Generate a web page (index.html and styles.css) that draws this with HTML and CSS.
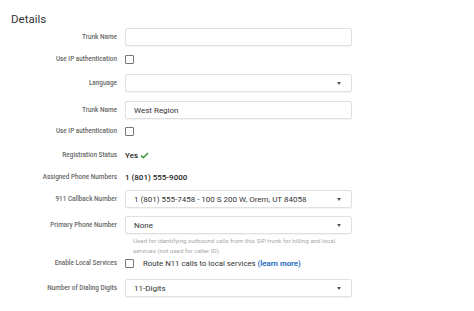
FILE: index.html
```html
<!DOCTYPE html>
<html>
<head>
<meta charset="utf-8">
<link rel="stylesheet" href="styles.css">
</head>
<body>
<div class="card">
  <h2 class="title">Details</h2>
  <div class="form">
    <div class="row r1">
      <div class="lbl">Trunk Name</div>
      <div class="input"></div>
    </div>
    <div class="row r2">
      <div class="lbl">Use IP authentication</div>
      <div class="ctl"><span class="cb"></span></div>
    </div>
    <div class="row r3">
      <div class="lbl">Language</div>
      <div class="input select"><span class="val"></span><span class="caret"></span></div>
    </div>
    <div class="row r4">
      <div class="lbl">Trunk Name</div>
      <div class="input"><span class="val">West Region</span></div>
    </div>
    <div class="row r5">
      <div class="lbl">Use IP authentication</div>
      <div class="ctl"><span class="cb"></span></div>
    </div>
    <div class="row r6">
      <div class="lbl">Registration Status</div>
      <div class="ctl"><span class="strong">Yes</span>
        <svg class="check" viewBox="0 0 10 8" width="9" height="7"><path d="M1 4.2 L3.6 6.6 L9 1.2" fill="none" stroke="#3a9a3a" stroke-width="1.8"/></svg>
      </div>
    </div>
    <div class="row r7">
      <div class="lbl">Assigned Phone Numbers</div>
      <div class="ctl"><span class="strong">1 (801) 555-9000</span></div>
    </div>
    <div class="row r8">
      <div class="lbl">911 Callback Number</div>
      <div class="input select"><span class="val">1 (801) 555-7458 - 100 S 200 W, Orem, UT 84058</span><span class="caret"></span></div>
    </div>
    <div class="row r9">
      <div class="lbl">Primary Phone Number</div>
      <div class="input select"><span class="val">None</span><span class="caret"></span></div>
    </div>
    <div class="row help-row">
      <div></div>
      <div class="help">Used for identifying outbound calls from this SIP trunk for billing and local services (not used for caller ID).</div>
    </div>
    <div class="row r11">
      <div class="lbl">Enable Local Services</div>
      <div class="ctl"><span class="cb"></span><span class="route">Route N11 calls to local services <a class="link">(learn more)</a></span></div>
    </div>
    <div class="row r12">
      <div class="lbl">Number of Dialing Digits</div>
      <div class="input select"><span class="val">11-Digits</span><span class="caret"></span></div>
    </div>
  </div>
</div>
</body>
</html>
```

FILE: styles.css
```css
html, body {
  margin: 0;
  padding: 0;
  background: #ffffff;
}
body {
  font-family: Roboto, "Liberation Sans", sans-serif;
  color: #333333;
  width: 474px;
  height: 311px;
  overflow: hidden;
}
.card {
  padding: 12px 0 0 0;
}
.title {
  margin: 0 0 0 11px;
  font-size: 11.5px;
  font-weight: 400;
  color: #333;
  line-height: 14px;
}
.form {
  display: flex;
  flex-direction: column;
  margin-top: 2px;
}
.row {
  display: grid;
  grid-template-columns: 117px 227px;
  column-gap: 8px;
  align-items: center;
  height: 18px;
}
.lbl {
  text-align: right;
  font-size: 6.4px;
  font-weight: 500;
  color: #666;
  white-space: nowrap;
}
.input {
  box-sizing: border-box;
  height: 18px;
  border: 1px solid #e0e0e0;
  border-radius: 2px;
  box-shadow: 0 1px 1px rgba(0,0,0,0.05);
  display: flex;
  align-items: center;
  padding: 0 8px 0 8px;
  background: #fff;
}
.val {
  flex: 1;
  font-size: 8px;
  color: #333;
  white-space: nowrap;
}
.caret {
  width: 0;
  height: 0;
  border-left: 2.5px solid transparent;
  border-right: 2.5px solid transparent;
  border-top: 3px solid #555;
  margin-right: 2px;
}
.ctl {
  display: flex;
  align-items: center;
}
.cb {
  box-sizing: border-box;
  width: 9px;
  height: 9px;
  border: 1px solid #777;
  border-radius: 1px;
  background: #fff;
}
.strong {
  font-size: 8px;
  font-weight: 500;
  color: #222;
}
.check {
  margin-left: 2px;
}
.help {
  font-size: 6.2px;
  line-height: 10px;
  color: #a8a8a8;
  padding-left: 8px;
  padding-right: 4px;
}
.route {
  margin-left: 9px;
  font-size: 7.8px;
  font-weight: 400;
  color: #333;
  white-space: nowrap;
}
.link {
  color: #2a6fbf;
  font-weight: 700;
}
.r1 { margin-top: 0; }
.r2 { margin-top: 4px; }
.r3 { margin-top: 6px; }
.r4 { margin-top: 9px; }
.r5 { margin-top: 3px; }
.r6 { margin-top: 6px; }
.r7 { margin-top: 4px; }
.r8 { margin-top: 4px; }
.r9 { margin-top: 8px; }
.help-row { height: auto; margin-top: 2px; align-items: start; }
.r11 { margin-top: 0; height: 14px; }
.r12 { margin-top: 9px; }
```
